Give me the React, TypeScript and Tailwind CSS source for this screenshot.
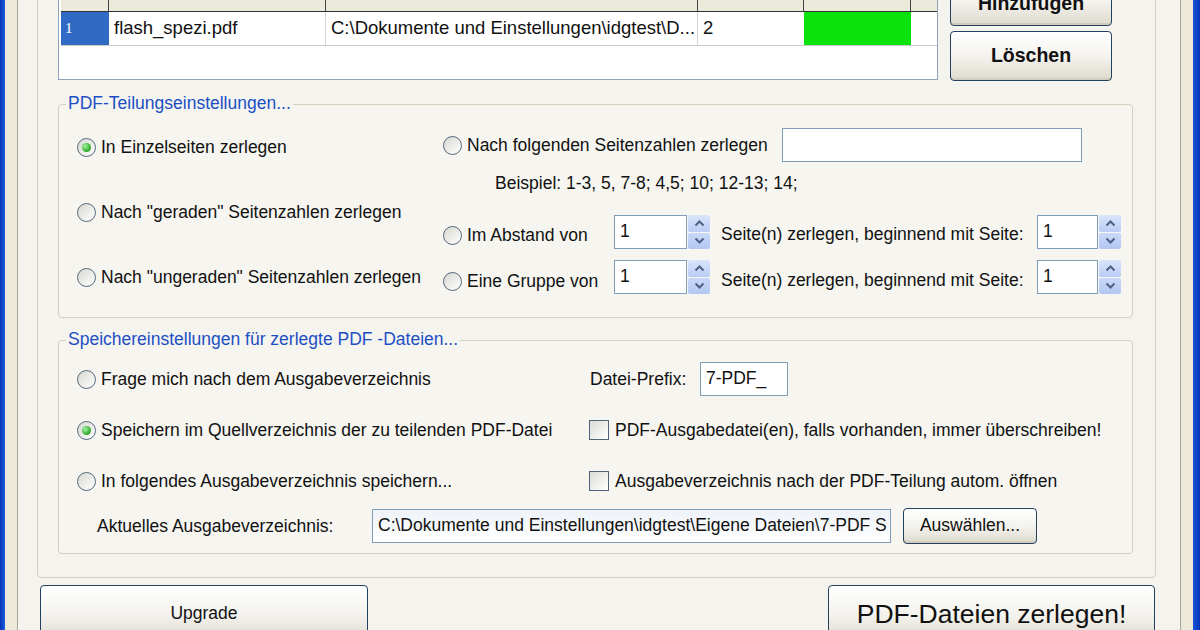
import React from "react";

function Radio({ checked }: { checked?: boolean }) {
  return (
    <span className="w-[19px] h-[19px] shrink-0 rounded-full border border-[#56697e] bg-gradient-to-br from-[#d8d8d0] to-[#ffffff] flex items-center justify-center">
      {checked && (
        <span className="w-[9px] h-[9px] rounded-full bg-[radial-gradient(circle_at_35%_35%,#a6f3a2,#25a725_70%)]" />
      )}
    </span>
  );
}

function RadioLabel({ checked, children }: { checked?: boolean; children: React.ReactNode }) {
  return (
    <div className="flex items-center gap-[5px] whitespace-nowrap">
      <Radio checked={checked} />
      <span className="pt-[2px]">{children}</span>
    </div>
  );
}

function Check() {
  return (
    <span className="w-[20px] h-[20px] shrink-0 border border-[#4f6378] bg-gradient-to-br from-[#dcdcd5] to-[#ffffff]" />
  );
}

function Input({ className, children }: { className?: string; children?: React.ReactNode }) {
  return (
    <div
      className={
        "h-[34px] shrink-0 border border-[#7f9db9] bg-white flex items-center px-[5px] whitespace-nowrap overflow-hidden " +
        (className ?? "")
      }
    >
      {children}
    </div>
  );
}

function Spin() {
  return (
    <div className="ml-[1px] w-[22px] h-[34px] shrink-0 flex flex-col gap-[1px]">
      <div className="flex-1 rounded-[2px] bg-gradient-to-b from-[#dbe5fb] to-[#b9ccf4] flex items-center justify-center">
        <svg width="11" height="7" viewBox="0 0 11 7">
          <path d="M1.5 5.5 L5.5 1.5 L9.5 5.5" stroke="#4d6185" strokeWidth="2" fill="none" />
        </svg>
      </div>
      <div className="flex-1 rounded-[2px] bg-gradient-to-b from-[#c9d8f8] to-[#b3c7f2] flex items-center justify-center">
        <svg width="11" height="7" viewBox="0 0 11 7">
          <path d="M1.5 1.5 L5.5 5.5 L9.5 1.5" stroke="#4d6185" strokeWidth="2" fill="none" />
        </svg>
      </div>
    </div>
  );
}

function Btn({ className, children }: { className?: string; children: React.ReactNode }) {
  return (
    <div
      className={
        "shrink-0 flex items-center justify-center rounded-[4px] border border-[#23405f] bg-gradient-to-b from-[#ffffff] via-[#f4f3ee] to-[#dedace] shadow-[inset_0_-2px_0_#d2ccbe,inset_0_1px_0_#ffffff] whitespace-nowrap " +
        (className ?? "")
      }
    >
      {children}
    </div>
  );
}

function Group({ title, children }: { title: string; children: React.ReactNode }) {
  return (
    <div className="relative h-[214px] border border-[#d0d0bf] rounded-[4px] bg-[#f6f5f0]">
      <span className="absolute -top-[10px] left-[7px] px-[2px] bg-[#f5f4ef] text-[#1d4fc4] whitespace-nowrap">
        {title}
      </span>
      {children}
    </div>
  );
}

export default function App() {
  return (
    <div className="w-[1200px] h-[630px] overflow-hidden flex bg-[#0a3ec8] font-['Liberation_Sans',Arial,sans-serif] text-[17.5px] leading-none text-[#111]">
      <div className="w-[5px] shrink-0 bg-gradient-to-r from-[#0733b5] to-[#1b5ddf]" />
      <div className="w-[1188px] shrink-0 bg-[#ece9d8] px-[12px]">
        <div className="h-full flex flex-col border-x border-[#a8a699] bg-[#f4f3ee] pl-[19px] pr-[24px]">
          {/* outer group */}
          <div className="shrink-0 -mt-[30px] h-[608px] border border-[#d0d0bf] rounded-[4px] pt-[5px] pl-[20px] pr-[22px]">
            {/* top row: table + buttons */}
            <div className="h-[105px] flex gap-[12px]">
              <div className="w-[880px] h-[104px] border border-[#8fa3b8] bg-white pl-[2px]">
                <div className="flex h-[35px] border-b border-[#333] bg-[#ebeadb]">
                  <div className="w-[48px] border-r border-[#444]" />
                  <div className="w-[217px] border-r border-[#444]" />
                  <div className="w-[372px] border-r border-[#444]" />
                  <div className="w-[106px] border-r border-[#444]" />
                  <div className="w-[107px] border-r border-[#444]" />
                </div>
                <div className="flex h-[34px] border-b border-[#c8c8c8] text-[18.5px]">
                  <div className="w-[48px] bg-[#316ac5] text-white text-[15px] pl-[4px] flex items-center font-['Liberation_Serif',serif]">
                    1
                  </div>
                  <div className="w-[217px] border-r border-[#d4d4d4] pl-[5px] flex items-center">flash_spezi.pdf</div>
                  <div className="w-[372px] border-r border-[#d4d4d4] pl-[5px] flex items-center whitespace-nowrap overflow-hidden">
                    C:\Dokumente und Einstellungen\idgtest\D...
                  </div>
                  <div className="w-[106px] pl-[5px] flex items-center">2</div>
                  <div className="w-[107px] bg-[#0be20b]" />
                </div>
              </div>
              <div className="w-[162px] flex flex-col gap-[5px] text-[19.5px] font-bold">
                <Btn className="h-[50px] pt-[6px]">Hinzufügen</Btn>
                <Btn className="h-[50px]">Löschen</Btn>
              </div>
            </div>

            {/* group 1 */}
            <div className="mt-[23px]">
              <Group title="PDF-Teilungseinstellungen...">
                <div className="flex pl-[18px]">
                  <div className="w-[366px] pt-[30px] flex flex-col gap-[41px]">
                    <div className="h-[24px] flex items-center">
                      <RadioLabel checked>In Einzelseiten zerlegen</RadioLabel>
                    </div>
                    <div className="h-[24px] flex items-center">
                      <RadioLabel>Nach "geraden" Seitenzahlen zerlegen</RadioLabel>
                    </div>
                    <div className="h-[24px] flex items-center">
                      <RadioLabel>Nach "ungeraden" Seitenzahlen zerlegen</RadioLabel>
                    </div>
                  </div>
                  <div className="pt-[23px] flex flex-col">
                    <div className="h-[34px] flex items-center">
                      <div className="w-[339px]">
                        <RadioLabel>Nach folgenden Seitenzahlen zerlegen</RadioLabel>
                      </div>
                      <Input className="w-[300px]" />
                    </div>
                    <div className="mt-[12px] h-[20px] pl-[52px] flex items-center whitespace-nowrap">
                      Beispiel: 1-3, 5, 7-8; 4,5; 10; 12-13; 14;
                    </div>
                    <div className="mt-[21px] h-[34px] flex items-center">
                      <div className="w-[171px] pt-[6px]">
                        <RadioLabel>Im Abstand von</RadioLabel>
                      </div>
                      <Input className="w-[73px]">1</Input>
                      <Spin />
                      <div className="ml-[11px] w-[316px] pt-[6px] whitespace-nowrap">
                        Seite(n) zerlegen, beginnend mit Seite:
                      </div>
                      <Input className="w-[61px]">1</Input>
                      <Spin />
                    </div>
                    <div className="mt-[11px] h-[34px] flex items-center">
                      <div className="w-[171px] pt-[8px]">
                        <RadioLabel>Eine Gruppe von</RadioLabel>
                      </div>
                      <Input className="w-[73px]">1</Input>
                      <Spin />
                      <div className="ml-[11px] w-[316px] pt-[8px] whitespace-nowrap">
                        Seite(n) zerlegen, beginnend mit Seite:
                      </div>
                      <Input className="w-[61px]">1</Input>
                      <Spin />
                    </div>
                  </div>
                </div>
              </Group>
            </div>

            {/* group 2 */}
            <div className="mt-[22px]">
              <Group title="Speichereinstellungen für zerlegte PDF -Dateien...">
                <div className="pl-[18px] pt-[21px] flex flex-col">
                  <div className="h-[34px] flex items-center">
                    <div className="w-[512px]">
                      <RadioLabel>Frage mich nach dem Ausgabeverzeichnis</RadioLabel>
                    </div>
                    <div className="w-[111px] pl-[1px] pt-[2px] whitespace-nowrap">Datei-Prefix:</div>
                    <Input className="w-[88px]">7-PDF_</Input>
                  </div>
                  <div className="mt-[17px] h-[34px] flex items-center">
                    <div className="w-[512px]">
                      <RadioLabel checked>Speichern im Quellverzeichnis der zu teilenden PDF-Datei</RadioLabel>
                    </div>
                    <div className="flex items-center gap-[6px] whitespace-nowrap">
                      <Check />
                      <span className="pt-[2px]">PDF-Ausgabedatei(en), falls vorhanden, immer überschreiben!</span>
                    </div>
                  </div>
                  <div className="mt-[17px] h-[34px] flex items-center">
                    <div className="w-[512px]">
                      <RadioLabel>In folgendes Ausgabeverzeichnis speichern...</RadioLabel>
                    </div>
                    <div className="flex items-center gap-[6px] whitespace-nowrap">
                      <Check />
                      <span className="pt-[2px]">Ausgabeverzeichnis nach der PDF-Teilung autom. öffnen</span>
                    </div>
                  </div>
                  <div className="mt-[10px] h-[36px] flex items-center pl-[20px]">
                    <div className="w-[275px] pt-[2px] whitespace-nowrap">Aktuelles Ausgabeverzeichnis:</div>
                    <Input className="w-[519px] bg-gradient-to-b from-[#eef2f7] to-[#ffffff]">
                      C:\Dokumente und Einstellungen\idgtest\Eigene Dateien\7-PDF S
                    </Input>
                    <Btn className="ml-[12px] w-[134px] h-[36px]">Auswählen...</Btn>
                  </div>
                </div>
              </Group>
            </div>
          </div>

          {/* bottom buttons */}
          <div className="shrink-0 mt-[7px] flex justify-between pl-[3px] pr-[1px]">
            <Btn className="w-[328px] h-[58px]">Upgrade</Btn>
            <Btn className="w-[327px] h-[58px] text-[26.5px]">PDF-Dateien zerlegen!</Btn>
          </div>
        </div>
      </div>
      <div className="w-[7px] shrink-0 bg-gradient-to-r from-[#1a55d8] to-[#0733b5]" />
    </div>
  );
}
